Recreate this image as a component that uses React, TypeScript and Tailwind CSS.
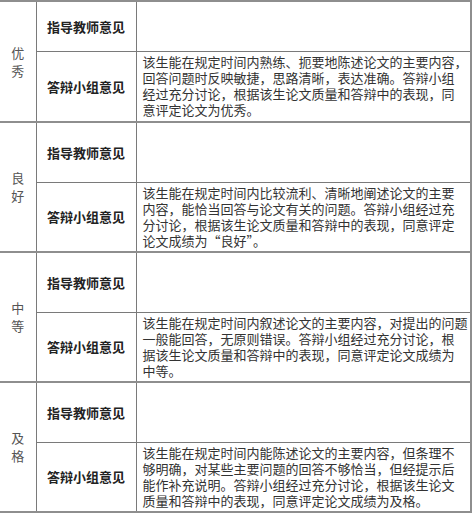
import React from "react";

type Grade = {
  name: [string, string];
  lines: string[];
  topH: number;
  bottomH: number;
};

const GRADES: Grade[] = [
  {
    name: ["优", "秀"],
    lines: [
      "该生能在规定时间内熟练、扼要地陈述论文的主要内容，",
      "回答问题时反映敏捷，思路清晰，表达准确。答辩小组",
      "经过充分讨论，根据该生论文质量和答辩中的表现，同",
      "意评定论文为优秀。",
    ],
    topH: 50,
    bottomH: 71,
  },
  {
    name: ["良", "好"],
    lines: [
      "该生能在规定时间内比较流利、清晰地阐述论文的主要",
      "内容，能恰当回答与论文有关的问题。答辩小组经过充",
      "分讨论，根据该生论文质量和答辩中的表现，同意评定",
      "论文成绩为“良好”。",
    ],
    topH: 60,
    bottomH: 70,
  },
  {
    name: ["中", "等"],
    lines: [
      "该生能在规定时间内叙述论文的主要内容，对提出的问题",
      "一般能回答，无原则错误。答辩小组经过充分讨论，根",
      "据该生论文质量和答辩中的表现，同意评定论文成绩为",
      "中等。",
    ],
    topH: 60,
    bottomH: 70,
  },
  {
    name: ["及", "格"],
    lines: [
      "该生能在规定时间内能陈述论文的主要内容，但条理不",
      "够明确，对某些主要问题的回答不够恰当，但经提示后",
      "能作补充说明。答辩小组经过充分讨论，根据该生论文",
      "质量和答辩中的表现，同意评定论文成绩为及格。",
    ],
    topH: 60,
    bottomH: 70,
  },
];

const font = {
  fontFamily: '"Noto Sans CJK SC", "Liberation Serif", serif',
};

export default function App() {
  return (
    <div className="w-[474px] h-[514px] bg-white overflow-hidden" style={font}>
      <table className="w-[472px] border-collapse table-fixed border-t-2 border-r-2 border-b-2 border-[#8e8e8e]">
        <colgroup>
          <col className="w-[36px]" />
          <col className="w-[100px]" />
          <col />
        </colgroup>
        <tbody>
          {GRADES.map((g, i) => (
            <React.Fragment key={i}>
              <tr style={{ height: g.topH }} className={i > 0 ? "border-t-2 border-[#8e8e8e]" : ""}>
                <td
                  rowSpan={2}
                  className="border-r border-[#7a7a7a] text-center align-middle text-[13px] leading-[18px] text-[#555]"
                >
                  {g.name[0]}
                  <br />
                  {g.name[1]}
                </td>
                <td className="border-r border-b border-[#7a7a7a] text-center align-middle text-[13px] font-bold text-[#222]">
                  指导教师意见
                </td>
                <td className="border-b border-[#7a7a7a]" />
              </tr>
              <tr style={{ height: g.bottomH }}>
                <td className="border-r border-[#7a7a7a] text-center align-middle text-[13px] font-bold text-[#222]">
                  答辩小组意见
                </td>
                <td className="pl-[6px] pr-1 align-middle text-[13px] leading-[16px] text-[#333] whitespace-nowrap">
                  {g.lines.map((l, j) => (
                    <div key={j}>{l}</div>
                  ))}
                </td>
              </tr>
            </React.Fragment>
          ))}
        </tbody>
      </table>
    </div>
  );
}
